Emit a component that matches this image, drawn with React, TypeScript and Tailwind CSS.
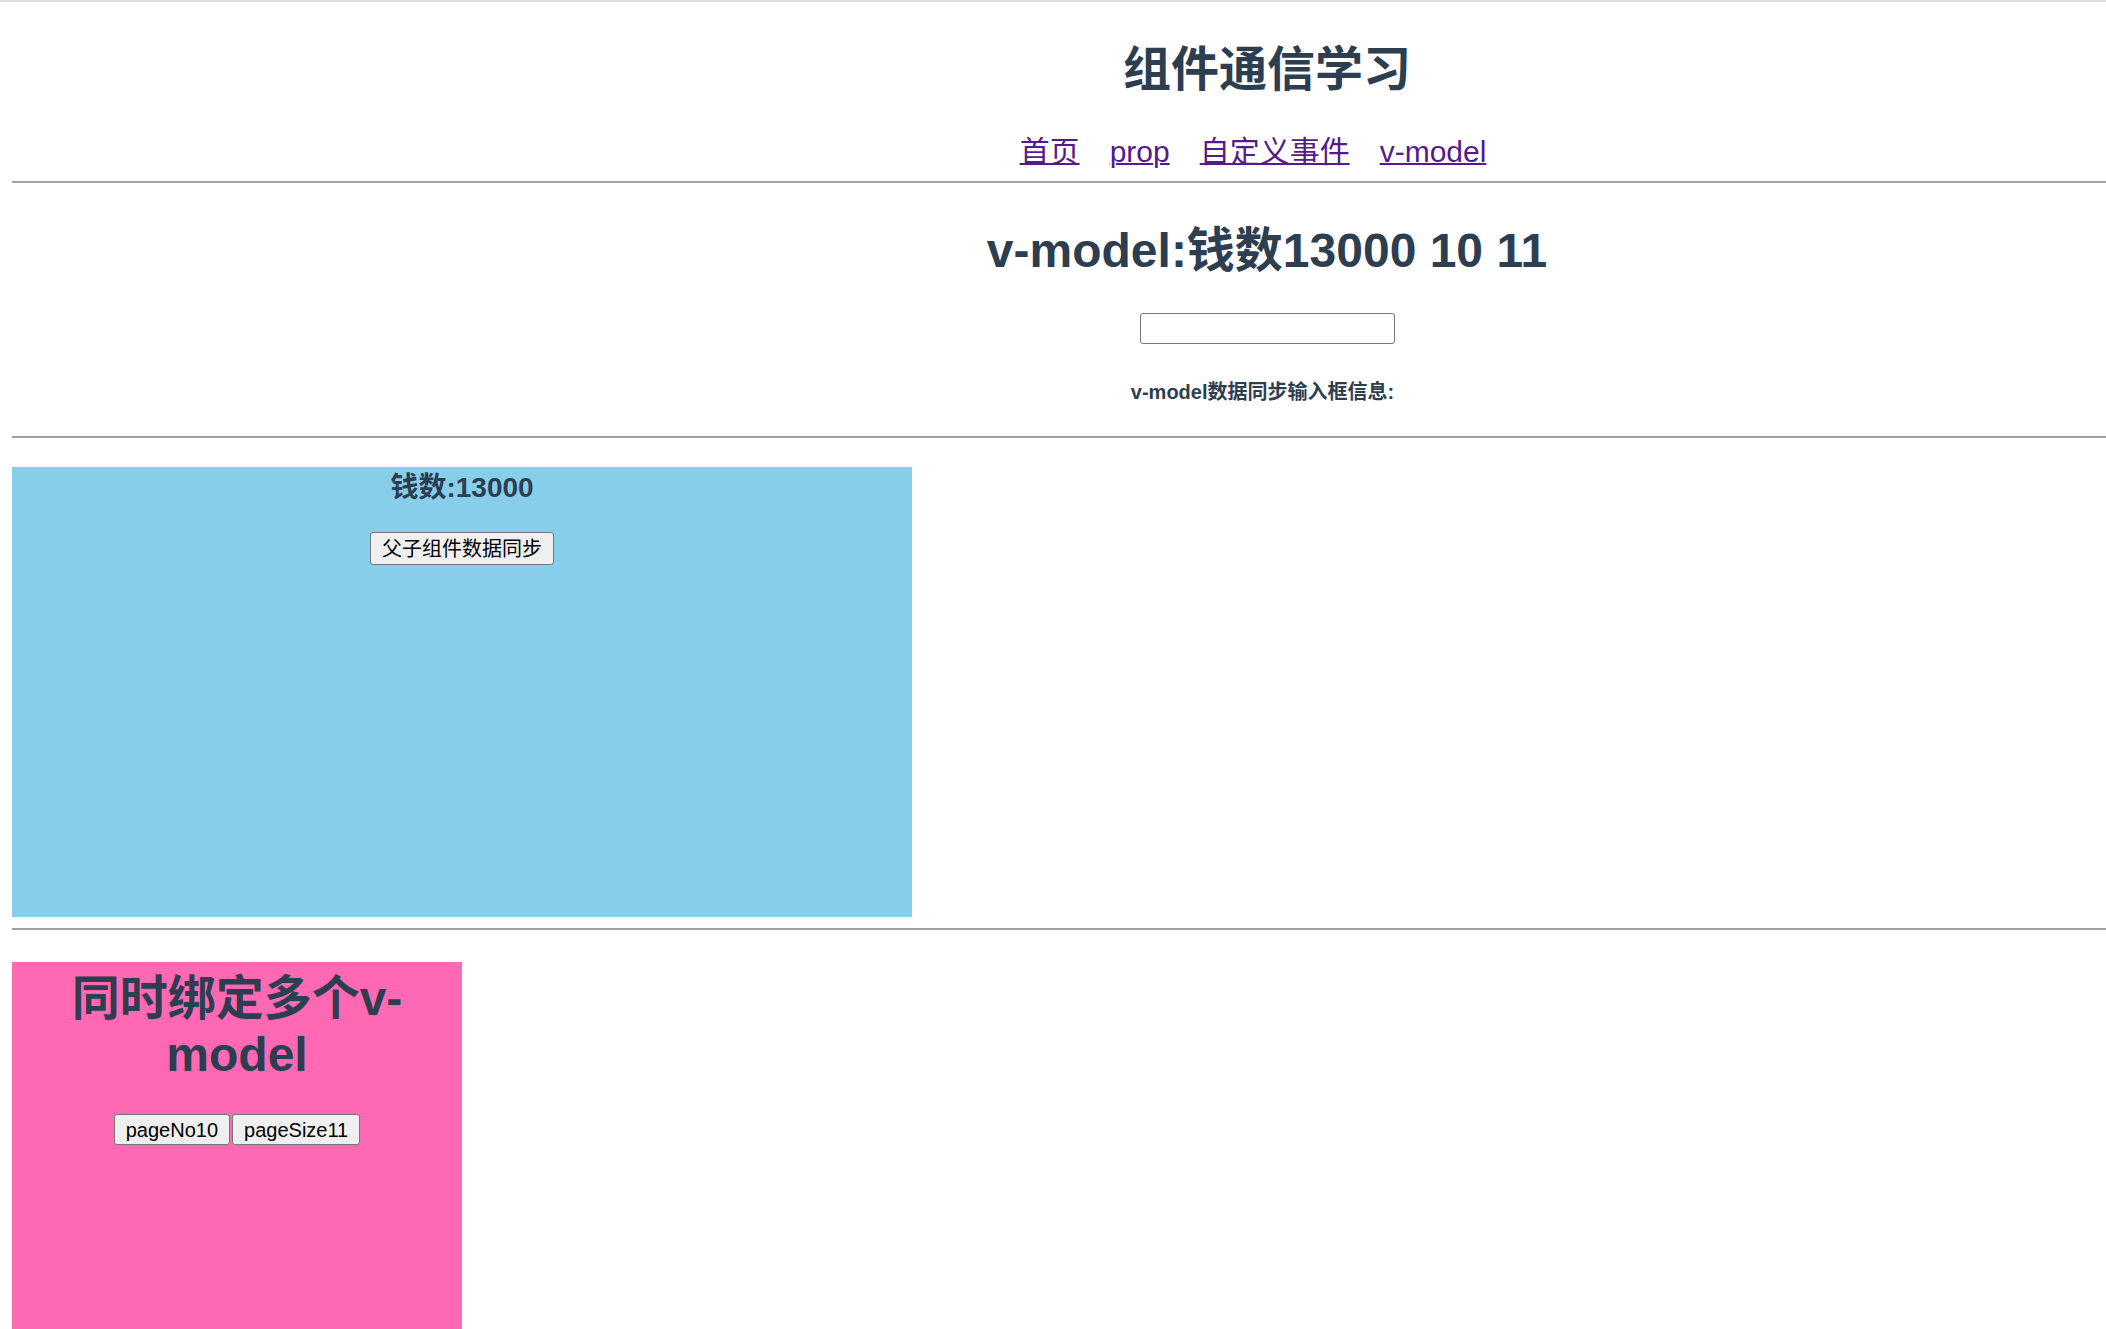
export default function App() {
  return (
    <div className="w-[2106px] h-[1329px] overflow-hidden bg-white font-['Liberation_Sans','Noto_Sans_CJK_SC',sans-serif] text-[#2c3e50]">
      <div className="h-[2px] bg-[#dcdcdc]" />
      <div className="ml-[12px] w-[2510px] text-center">
        <h1 className="mt-[40px] text-[48px] leading-[56px] font-bold">组件通信学习</h1>
        <nav className="mt-[36px] pl-[2px] text-[30px] leading-[36px]">
          <a href="#" className="mr-[30px] text-[#551a8b] underline decoration-2">首页</a>
          <a href="#" className="mr-[30px] text-[#551a8b] underline decoration-2">prop</a>
          <a href="#" className="mr-[30px] text-[#551a8b] underline decoration-2">自定义事件</a>
          <a href="#" className="mr-[30px] text-[#551a8b] underline decoration-2">v-model</a>
        </nav>
        <div className="mt-[11px] h-[2px] bg-[#a0a0a0]" />
        <h1 className="mt-[40px] text-[48px] leading-[56px] font-bold">v-model:钱数13000 10 11</h1>
        <div className="mt-[34px] flex justify-center">
          <input
            type="text"
            className="w-[255px] h-[31px] bg-white border-[1.5px] border-[#767676] rounded-[3px] outline-none"
          />
        </div>
        <h5 className="mt-[36px] pr-[9px] text-[20px] leading-[24px] font-bold">v-model数据同步输入框信息:</h5>
        <div className="mt-[32px] h-[2px] bg-[#a0a0a0]" />
        <div className="mt-[29px] w-[900px] h-[450px] bg-[#87ceeb] pt-[5px] flex flex-col items-center">
          <h3 className="text-[28px] leading-[32px] font-bold">钱数:13000</h3>
          <button className="mt-[28px] h-[33px] px-[11px] text-[20px] leading-[24px] text-black bg-[#efefef] border-[1.5px] border-[#767676] rounded-[3px]">
            父子组件数据同步
          </button>
        </div>
        <div className="mt-[11px] h-[2px] bg-[#a0a0a0]" />
        <div className="mt-[32px] w-[450px] h-[450px] bg-[#ff69b4] pt-[9px] flex flex-col items-center">
          <h1 className="text-[48px] leading-[56px] font-bold px-[8px]">同时绑定多个v-model</h1>
          <div className="mt-[31px] flex">
            <button className="h-[31px] px-[11px] text-[20px] leading-[24px] text-black bg-[#efefef] border-[1.5px] border-[#767676] rounded-[3px]">
              pageNo10
            </button>
            <button className="ml-[2px] h-[31px] px-[11px] text-[20px] leading-[24px] text-black bg-[#efefef] border-[1.5px] border-[#767676] rounded-[3px]">
              pageSize11
            </button>
          </div>
        </div>
      </div>
    </div>
  );
}
